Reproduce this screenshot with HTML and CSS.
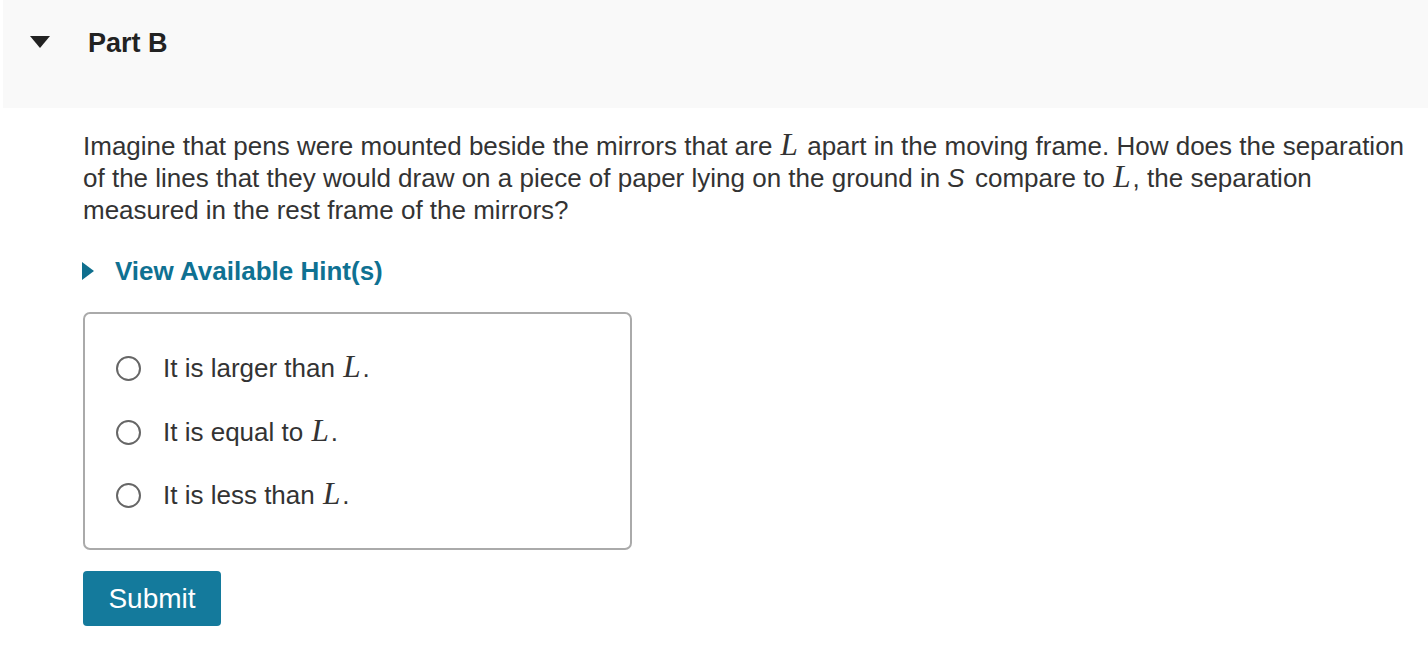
FILE: index.html
```html
<!DOCTYPE html>
<html>
<head>
<meta charset="utf-8">
<link rel="stylesheet" href="styles.css">
</head>
<body>
<div class="part-header">
  <svg class="caret-down" width="20" height="12" viewBox="0 0 20 12"><polygon points="0,0 20,0 10,12" fill="#222"/></svg>
  <h2 class="part-title">Part B</h2>
</div>
<div class="content">
  <p class="question">Imagine that pens were mounted beside the mirrors that are <span class="m">L</span> apart in the moving frame. How does the separation of the lines that they would draw on a piece of paper lying on the ground in <i class="s">S</i> compare to <span class="m">L</span>, the separation measured in the rest frame of the mirrors?</p>
  <div class="hint">
    <svg class="caret-right" width="12" height="18" viewBox="0 0 12 18"><polygon points="0,0 12,9 0,18" fill="#0f6f8e"/></svg>
    <span class="hint-text">View Available Hint(s)</span>
  </div>
  <div class="options">
    <label class="opt"><span class="radio"></span><span>It is larger than <span class="m">L</span>.</span></label>
    <label class="opt"><span class="radio"></span><span>It is equal to <span class="m">L</span>.</span></label>
    <label class="opt"><span class="radio"></span><span>It is less than <span class="m">L</span>.</span></label>
  </div>
  <button class="submit">Submit</button>
</div>
</body>
</html>
```
FILE: styles.css
```css
html, body {
  margin: 0;
  padding: 0;
  background: #fff;
  font-family: "Liberation Sans", Arial, sans-serif;
  color: #333;
}
.part-header {
  margin-left: 3px;
  height: 108px;
  background: #f9f9f9;
  display: flex;
  align-items: flex-start;
  padding-top: 24px;
  box-sizing: border-box;
}
.caret-down {
  margin-left: 27px;
  margin-top: 12px;
  flex: none;
}
.part-title {
  margin: 0 0 0 38px;
  font-size: 27px;
  font-weight: bold;
  color: #222;
  line-height: 38px;
}
.content {
  padding-left: 83px;
  padding-right: 12px;
}
.question {
  margin: 22px 0 0 0;
  font-size: 26px;
  line-height: 32px;
  color: #333;
}
.m {
  font-family: "Liberation Serif", "Times New Roman", serif;
  font-style: italic;
  font-size: 1.2em;
  line-height: 0;
  padding: 0 2px 0 1px;
  color: #333;
}
.s {
  font-style: italic;
  padding-right: 3px;
}
.hint {
  margin-top: 29px;
  display: flex;
  align-items: center;
  height: 32px;
}
.caret-right {
  flex: none;
  margin-left: -1px;
}
.hint-text {
  margin-left: 21px;
  font-size: 26px;
  font-weight: bold;
  color: #0f7192;
}
.options {
  margin-top: 25px;
  width: 549px;
  height: 238px;
  box-sizing: border-box;
  border: 2px solid #aaa;
  border-radius: 7px;
  padding-top: 23px;
  display: flex;
  flex-direction: column;
}
.opt {
  display: flex;
  align-items: center;
  height: 63.5px;
  padding-left: 31px;
  font-size: 26px;
  color: #333;
}
.radio {
  width: 25px;
  height: 25px;
  box-sizing: border-box;
  border: 2px solid #666;
  border-radius: 50%;
  margin-right: 22px;
  flex: none;
}
.submit {
  margin-top: 21px;
  width: 138px;
  height: 55px;
  border: none;
  border-radius: 4px;
  background: #147a9c;
  color: #fff;
  font-family: "Liberation Sans", Arial, sans-serif;
  font-size: 28px;
  padding: 0;
  display: block;
}
```
